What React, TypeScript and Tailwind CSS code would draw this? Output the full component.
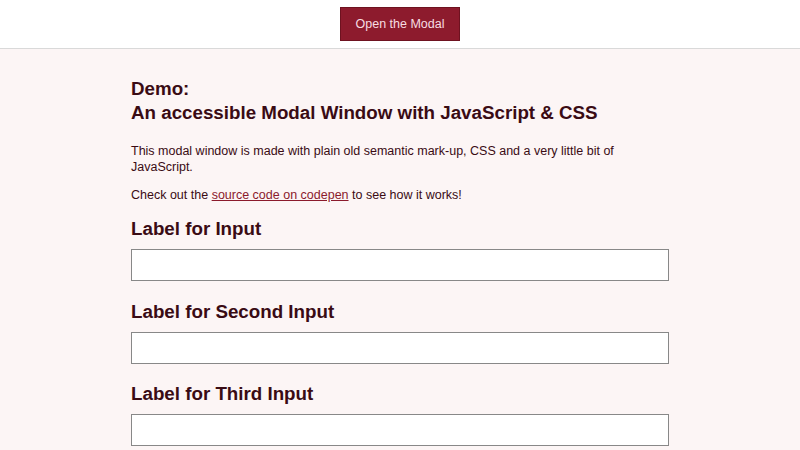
const fields = ['Label for Input', 'Label for Second Input', 'Label for Third Input'];

export default function App() {
  return (
    <div className="min-h-[450px] bg-[#fcf5f5] font-['Liberation_Sans',Arial,sans-serif] text-[#3a0b14]">
      {/* Top bar */}
      <header className="flex h-[49px] items-start justify-center border-b border-[#d9d9d9] bg-white pt-[7px]">
        <button className="h-[34px] w-[120px] border border-[#6e1220] bg-[#8d1b2d] text-[12.5px] text-[#f7dde2]">
          Open the Modal
        </button>
      </header>

      <main className="mx-auto w-[538px] pt-[28px]">
        <h1 className="text-[18.75px] font-bold leading-[24px]">
          Demo:
          <br />
          An accessible Modal Window with JavaScript &amp; CSS
        </h1>
        <p className="mt-[18px] text-[12.5px] leading-[16px]">
          This modal window is made with plain old semantic mark-up, CSS and a very little bit of JavaScript.
        </p>
        <p className="mt-[12px] text-[12.5px] leading-[16px]">
          Check out the{' '}
          <a href="#" className="text-[#8b1a2c] underline">
            source code on codepen
          </a>{' '}
          to see how it works!
        </p>

        <form className="mt-[14px]">
          {fields.map((label) => (
            <div key={label} className="mb-[18.5px]">
              <label className="block text-[18.75px] font-bold leading-[23px]">{label}</label>
              <input type="text" className="mt-[9px] block h-[32px] w-full border border-[#888] bg-white" />
            </div>
          ))}
        </form>
      </main>
    </div>
  );
}
